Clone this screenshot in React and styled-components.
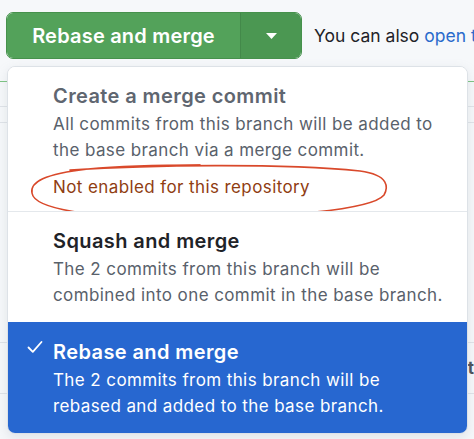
import React from "react";
import styled, { createGlobalStyle } from "styled-components";

const Global = createGlobalStyle`
  html, body { margin: 0; padding: 0; background: #f6f8fa; }
  body { font-family: Inter, "Noto Sans", "Liberation Sans", sans-serif; color: #24292f; }
`;

const Page = styled.div`
  position: relative;
  width: 474px;
  height: 439px;
  overflow: hidden;
  background: #f6f8fa;
`;

const Header = styled.div`
  display: flex;
  align-items: center;
  gap: 12px;
  padding: 12px 0 0 6px;
`;

const ButtonGroup = styled.div`
  display: flex;
  flex-shrink: 0;
  width: 296px;
  height: 47px;
  border-radius: 7px;
  overflow: hidden;
  border: 1px solid #46914c;
  box-sizing: border-box;
`;

const MainButton = styled.div`
  width: 233px;
  flex-shrink: 0;
  display: flex;
  align-items: center;
  justify-content: center;
  background: #53a25a;
  color: #fff;
  font-size: 20px;
  font-weight: 600;
  letter-spacing: 0.2px;
  white-space: nowrap;
  box-sizing: border-box;
`;

const CaretButton = styled.div`
  flex: 1;
  display: flex;
  align-items: center;
  justify-content: center;
  background: #4b9752;
  border-left: 1px solid #43894a;
`;

const Aside = styled.div`
  font-size: 17.5px;
  white-space: nowrap;
  color: #1f2328;
  min-width: 0;
  overflow: hidden;
`;

const Link = styled.span`
  color: #2a6bcc;
`;

const Background = styled.div`
  margin-top: 22px;
  border-top: 1px solid #7cc482;
`;

const BgRow = styled.div`
  height: ${(p) => p.h}px;
  border-bottom: 1px solid #dfe3e8;
  display: flex;
  justify-content: flex-end;
  align-items: center;
  font-size: 17px;
  font-weight: 700;
  color: #4a5058;
`;

const Menu = styled.div`
  position: absolute;
  left: 7px;
  top: 66px;
  width: 461px;
  background: #fff;
  border: 1px solid #dde2e7;
  border-radius: 8px;
  box-shadow: 0 4px 12px rgba(140, 149, 159, 0.2);
  overflow: hidden;
  box-sizing: border-box;
`;

const Item = styled.div`
  position: relative;
  padding: ${(p) => (p.selected ? "17px" : "16px")} 8px ${(p) => p.pb || 14}px 45px;
  background: ${(p) => (p.selected ? "#2767d0" : "#fff")};
  border-top: ${(p) => (p.first || p.selected ? "none" : "1px solid #e4e8ec")};
`;

const Title = styled.div`
  font-size: 20px;
  line-height: 26px;
  font-weight: 600;
  letter-spacing: 0.4px;
  margin-bottom: 2px;
  color: ${(p) => (p.selected ? "#fff" : p.disabled ? "#5f6670" : "#1f2328")};
`;

const Desc = styled.div`
  font-size: 17px;
  line-height: 26px;
  letter-spacing: 0.4px;
  white-space: nowrap;
  color: ${(p) => (p.selected ? "#fff" : "#59616b")};
`;

const Warning = styled.div`
  position: relative;
  margin-top: 11px;
  font-size: 17px;
  line-height: 26px;
  letter-spacing: 0.4px;
  color: #8f3d12;
`;

const Ellipse = styled.svg`
  position: absolute;
  left: -31px;
  top: -12px;
  pointer-events: none;
`;

const Check = styled.svg`
  position: absolute;
  left: 19px;
  top: 18px;
`;

export default function App() {
  return (
    <Page>
      <Global />
      <Header>
        <ButtonGroup>
          <MainButton>Rebase and merge</MainButton>
          <CaretButton>
            <svg width="11" height="6" viewBox="0 0 11 6">
              <path d="M0 0 H11 L5.5 6 Z" fill="#fff" />
            </svg>
          </CaretButton>
        </ButtonGroup>
        <Aside>
          You can also <Link>open this</Link>
        </Aside>
      </Header>
      <Background>
        <BgRow h={24} />
        <BgRow h={15} />
        <BgRow h={219} />
        <BgRow h={50}>t</BgRow>
      </Background>
      <Menu>
        <Item first pb={11}>
          <Title disabled>Create a merge commit</Title>
          <Desc>All commits from this branch will be added to</Desc>
          <Desc>the base branch via a merge commit.</Desc>
          <Warning>
            Not enabled for this repository
            <Ellipse width="370" height="62" viewBox="0 0 370 62">
              <path
                d="M 40 6 C 120 1, 250 -1, 330 7 C 360 11, 358 24, 354 31 C 342 46, 250 54, 150 54 C 60 54, 4 45, 2 29 C 0 18, 14 10, 58 5 C 90 2, 130 1, 170 1"
                fill="none"
                stroke="#d9492b"
                strokeWidth="1.6"
                strokeLinecap="round"
                transform="translate(8 2)"
              />
            </Ellipse>
          </Warning>
        </Item>
        <Item>
          <Title>Squash and merge</Title>
          <Desc>The 2 commits from this branch will be</Desc>
          <Desc>combined into one commit in the base branch.</Desc>
        </Item>
        <Item selected>
          <Check width="16" height="14" viewBox="0 0 16 14">
            <path d="M1.5 7.5 L5.8 11.8 L14.5 2" fill="none" stroke="#fff" strokeWidth="1.8" strokeLinecap="round" strokeLinejoin="round" />
          </Check>
          <Title selected>Rebase and merge</Title>
          <Desc selected>The 2 commits from this branch will be</Desc>
          <Desc selected>rebased and added to the base branch.</Desc>
        </Item>
      </Menu>
    </Page>
  );
}
